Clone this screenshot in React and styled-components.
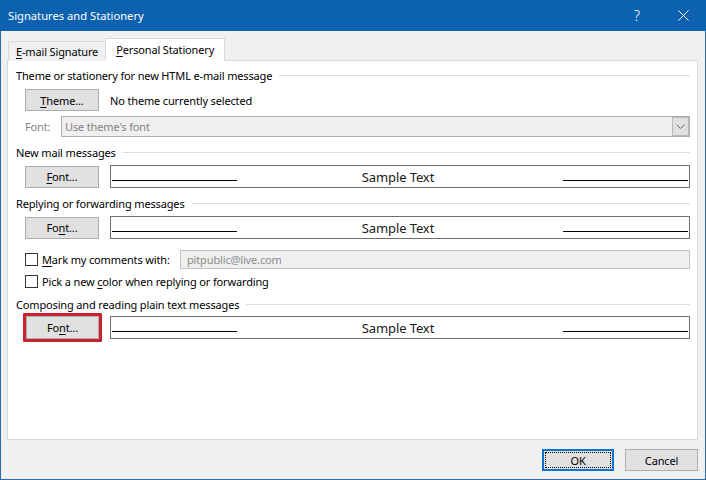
import React from "react";
import styled, { createGlobalStyle } from "styled-components";

const GlobalStyle = createGlobalStyle`
  html, body {
    margin: 0;
    padding: 0;
    background: #ffffff;
  }
  body {
    font-family: "Noto Sans", "Segoe UI", sans-serif;
    font-size: 11px;
    letter-spacing: -0.15px;
    color: #000;
  }
`;

const Window = styled.div`
  width: 706px;
  height: 480px;
  display: flex;
  flex-direction: column;
  box-sizing: border-box;
`;

const TitleBar = styled.div`
  height: 31px;
  flex: none;
  background: #0d62b0;
  color: #fff;
  display: flex;
  align-items: center;
  padding-left: 8px;
`;

const Title = styled.div`
  flex: 1;
  font-size: 11.2px;
  letter-spacing: 0;
`;

const TitleButton = styled.div`
  width: 46px;
  height: 31px;
  display: flex;
  align-items: center;
  justify-content: center;
  font-size: 14px;
  font-weight: 300;
`;

const Body = styled.div`
  flex: 1;
  background: #f0f0f0;
  border: 1px solid #2a6aa6;
  border-top: none;
  padding: 7px 7px 0 6px;
  display: flex;
  flex-direction: column;
`;

const Tabs = styled.div`
  display: flex;
  align-items: flex-end;
  height: 23px;
  margin-bottom: -1px;
  padding-left: 1px;
  position: relative;
  z-index: 1;
`;

const Tab = styled.div`
  box-sizing: border-box;
  height: ${(p) => (p.$active ? "23px" : "20px")};
  padding: ${(p) => (p.$active ? "0 10px" : "0 7px")};
  display: flex;
  align-items: center;
  background: ${(p) => (p.$active ? "#ffffff" : "#f0f0f0")};
  border: 1px solid #d9d9d9;
  border-bottom: ${(p) => (p.$active ? "1px solid #ffffff" : "none")};
  border-right: ${(p) => (p.$active ? "1px solid #d9d9d9" : "none")};
  padding-bottom: ${(p) => (p.$active ? "1px" : "0")};
`;

const Key = styled.span`
  text-decoration: underline;
  text-underline-offset: 2px;
`;

const Panel = styled.div`
  height: 380px;
  flex: none;
  box-sizing: border-box;
  background: #ffffff;
  border: 1px solid #d9d9d9;
  padding: 6px 7px 0 8px;
`;

const SectionHeading = styled.div`
  height: 16px;
  margin-top: ${(p) => p.$mt || 0}px;
  display: flex;
  align-items: center;
  gap: 7px;
  &::after {
    content: "";
    flex: 1;
    height: 1px;
    background: #dcdcdc;
  }
`;

const Row = styled.div`
  display: flex;
  align-items: center;
  height: ${(p) => p.$h}px;
  margin-top: ${(p) => p.$mt}px;
  padding-left: 9px;
`;

const Button = styled.div`
  box-sizing: border-box;
  width: ${(p) => p.$w || 74}px;
  height: ${(p) => p.$h || 22}px;
  flex: none;
  background: #e1e1e1;
  border: 1px solid #adadad;
  display: flex;
  align-items: center;
  justify-content: center;
`;

const Highlight = styled.div`
  margin-left: -2px;
  border: 3px solid #c8242d;
  border-radius: 1px;
  display: flex;
`;

const Note = styled.span`
  margin-left: 11px;
`;

const FieldLabel = styled.span`
  width: 36px;
  flex: none;
  color: #838383;
`;

const Select = styled.div`
  flex: 1;
  height: 21px;
  box-sizing: border-box;
  border: 1px solid #aeaeae;
  background: #efefef;
  display: flex;
  align-items: center;
  padding-left: 3px;
  color: #838383;
`;

const SelectText = styled.span`
  flex: 1;
`;

const Arrow = styled.div`
  width: 17px;
  height: 19px;
  box-sizing: border-box;
  border: 1px solid #b9b9b9;
  background: #e0e0e0;
  display: flex;
  align-items: center;
  justify-content: center;
`;

const SampleBox = styled.div`
  flex: 1;
  height: 23px;
  box-sizing: border-box;
  margin-left: ${(p) => p.$ml || 11}px;
  border: 1px solid #6e6e6e;
  display: flex;
  align-items: center;
`;

const Underline = styled.span`
  width: 125px;
  height: 1px;
  background: #000;
  align-self: flex-end;
  margin: 0 1px 6px 1px;
`;

const SampleText = styled.span`
  flex: 1;
  text-align: center;
  font-size: 13px;
  letter-spacing: -0.1px;
  padding-right: 4px;
  color: #1a1a1a;
`;

const CheckItem = styled.label`
  display: flex;
  align-items: center;
  width: ${(p) => p.$w || "auto"};
  flex: none;
`;

const Box = styled.span`
  width: 13px;
  height: 13px;
  box-sizing: border-box;
  border: 1px solid #333;
  background: #fff;
  margin-right: 4px;
`;

const TextInput = styled.div`
  flex: 1;
  height: 19px;
  box-sizing: border-box;
  border: 1px solid #c2c2c2;
  background: #f0f0f0;
  color: #8c8c8c;
  display: flex;
  align-items: center;
  padding-left: 6px;
`;

const Footer = styled.div`
  display: flex;
  justify-content: flex-end;
  gap: 11px;
  margin-top: 9px;
`;

const DefaultButton = styled(Button)`
  border: 2px solid #0a74d0;
  position: relative;
  &::after {
    content: "";
    position: absolute;
    inset: 1px;
    border: 1px dotted #000;
  }
`;

function Sample({ ml }) {
  return (
    <SampleBox $ml={ml}>
      <Underline />
      <SampleText>Sample Text</SampleText>
      <Underline />
    </SampleBox>
  );
}

export default function App() {
  return (
    <>
      <GlobalStyle />
      <Window>
        <TitleBar>
          <Title>Signatures and Stationery</Title>
          <TitleButton>?</TitleButton>
          <TitleButton>
            <svg width="11" height="11" viewBox="0 0 11 11">
              <path d="M0.5 0.5 L10.5 10.5 M10.5 0.5 L0.5 10.5" stroke="#fff" strokeWidth="1" />
            </svg>
          </TitleButton>
        </TitleBar>
        <Body>
          <Tabs>
            <Tab>
              <Key>E</Key>-mail Signature
            </Tab>
            <Tab $active>
              <Key>P</Key>ersonal Stationery
            </Tab>
          </Tabs>
          <Panel>
            <SectionHeading>Theme or stationery for new HTML e-mail message</SectionHeading>
            <Row $h={22} $mt={6}>
              <Button>
                <span>
                  <Key>T</Key>heme...
                </span>
              </Button>
              <Note>No theme currently selected</Note>
            </Row>
            <Row $h={21} $mt={5}>
              <FieldLabel>Font:</FieldLabel>
              <Select>
                <SelectText>Use theme's font</SelectText>
                <Arrow>
                  <svg width="9" height="5" viewBox="0 0 9 5">
                    <path d="M0.5 0.5 L4.5 4.5 L8.5 0.5" stroke="#6d6d6d" strokeWidth="1" fill="none" />
                  </svg>
                </Arrow>
              </Select>
            </Row>

            <SectionHeading $mt={7}>New mail messages</SectionHeading>
            <Row $h={23} $mt={5}>
              <Button>
                <span>
                  <Key>F</Key>ont...
                </span>
              </Button>
              <Sample />
            </Row>

            <SectionHeading $mt={7}>Replying or forwarding messages</SectionHeading>
            <Row $h={23} $mt={5}>
              <Button>
                <span>
                  Fo<Key>n</Key>t...
                </span>
              </Button>
              <Sample />
            </Row>
            <Row $h={19} $mt={11}>
              <CheckItem $w="155px">
                <Box />
                <span>
                  <Key>M</Key>ark my comments with:
                </span>
              </CheckItem>
              <TextInput>pitpublic@live.com</TextInput>
            </Row>
            <Row $h={14} $mt={5}>
              <CheckItem>
                <Box />
                <span>
                  Pick a new <Key>c</Key>olor when replying or forwarding
                </span>
              </CheckItem>
            </Row>

            <SectionHeading $mt={8}>Composing and reading plain text messages</SectionHeading>
            <Row $h={29} $mt={1}>
              <Highlight>
                <Button $w={73} $h={23}>
                  <span>
                    Fo<Key>n</Key>t...
                  </span>
                </Button>
              </Highlight>
              <Sample ml={8} />
            </Row>
          </Panel>
          <Footer>
            <DefaultButton $w={72} $h={22}>OK</DefaultButton>
            <Button $w={73} $h={22}>Cancel</Button>
          </Footer>
        </Body>
      </Window>
    </>
  );
}
